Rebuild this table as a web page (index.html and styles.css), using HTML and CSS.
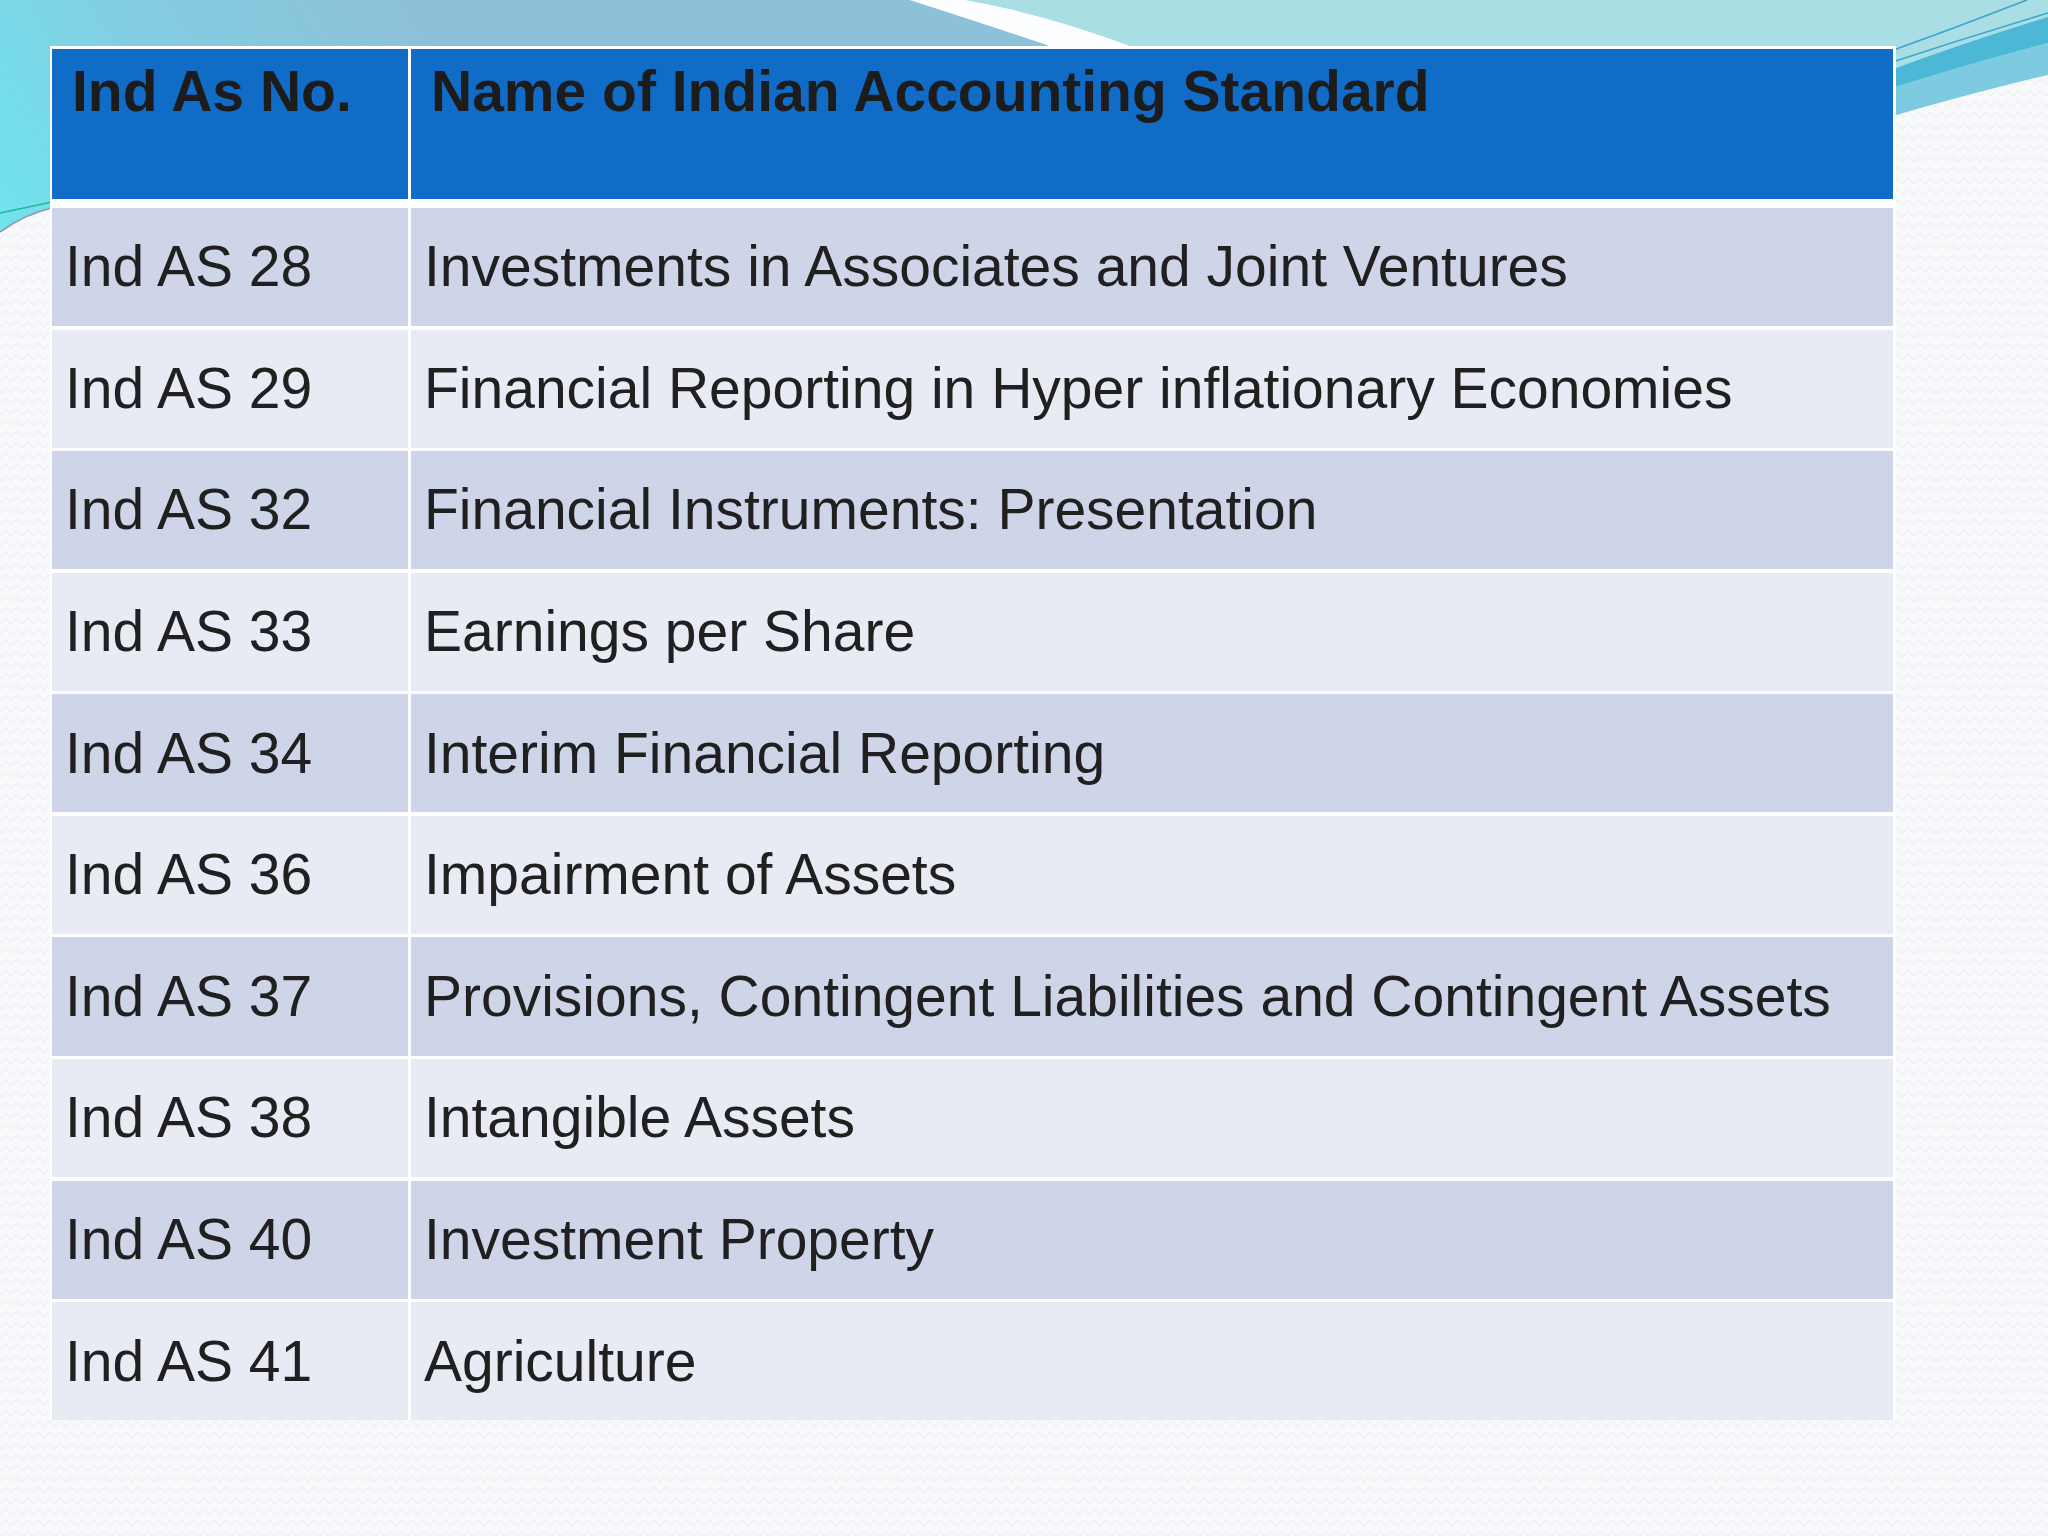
FILE: index.html
```html
<!DOCTYPE html>
<html lang="en">
<head>
<meta charset="utf-8">
<title>Indian Accounting Standards</title>
<link rel="stylesheet" href="styles.css">
</head>
<body>
<div class="backdrop">
  <svg width="2048" height="1536" viewBox="0 0 2048 1536" xmlns="http://www.w3.org/2000/svg">
    <defs>
      <pattern id="zig" width="22" height="11" patternUnits="userSpaceOnUse">
        <path d="M0 8 L5.5 2 L11 8 L16.5 2 L22 8" fill="none" stroke="#e9ebf0" stroke-width="1"/>
      </pattern>
      <linearGradient id="blueGrad" x1="400" y1="0" x2="0" y2="240" gradientUnits="userSpaceOnUse">
        <stop offset="0" stop-color="#8dc1d9"/>
        <stop offset="0.5" stop-color="#83cde0"/>
        <stop offset="1" stop-color="#6fe4ef"/>
      </linearGradient>
    </defs>
    <rect x="0" y="0" width="2048" height="1536" fill="#f8f9fb"/>
    <rect x="0" y="0" width="2048" height="1536" fill="url(#zig)"/>
    <path d="M0 0 H910 Q985 24 1050 46 L1050 205 L60 205 Q25 214 0 232 Z" fill="url(#blueGrad)"/>
    <path d="M910 0 Q985 24 1050 46 L1130 46 Q1045 14 965 0 Z" fill="#fdfeff"/>
    <path d="M965 0 H2048 V200 H1130 V46 Q1045 14 965 0 Z" fill="#a8dee4"/>
    <path d="M1880 74 Q1960 44 2048 17 V43 Q1960 66 1880 92 Z" fill="#4db7d6"/>
    <path d="M1880 92 Q1960 66 2048 43 V75 Q1960 96 1880 120 Z" fill="#7dcbe0"/>
    <path d="M1880 120 Q1960 96 2048 75 V300 H1880 Z" fill="#f8f9fb"/>
    <path d="M1880 120 Q1960 96 2048 75 V300 H1880 Z" fill="url(#zig)"/>
    <path d="M1880 55 Q1955 28 2027 0" fill="none" stroke="#3ba5cc" stroke-width="1.6"/>
    <path d="M1880 66 Q1965 38 2048 13" fill="none" stroke="#3ba5cc" stroke-width="1.6"/>
    <path d="M0 213 L52 202" fill="none" stroke="#1fb99b" stroke-width="1.6"/>
    <path d="M0 232 Q25 214 52 208" fill="none" stroke="#8f9ca2" stroke-width="1.6"/>
  </svg>
</div>
<main class="slide">
  <div class="table">
    <div class="row head">
      <div class="cell">Ind As No.</div>
      <div class="cell">Name of Indian Accounting Standard</div>
    </div>
    <div class="row odd"><div class="cell">Ind AS 28</div><div class="cell">Investments in Associates and Joint Ventures</div></div>
    <div class="row even"><div class="cell">Ind AS 29</div><div class="cell">Financial Reporting in Hyper inflationary Economies</div></div>
    <div class="row odd"><div class="cell">Ind AS 32</div><div class="cell">Financial Instruments: Presentation</div></div>
    <div class="row even"><div class="cell">Ind AS 33</div><div class="cell">Earnings per Share</div></div>
    <div class="row odd"><div class="cell">Ind AS 34</div><div class="cell">Interim Financial Reporting</div></div>
    <div class="row even"><div class="cell">Ind AS 36</div><div class="cell">Impairment of Assets</div></div>
    <div class="row odd"><div class="cell">Ind AS 37</div><div class="cell">Provisions, Contingent Liabilities and Contingent Assets</div></div>
    <div class="row even"><div class="cell">Ind AS 38</div><div class="cell">Intangible Assets</div></div>
    <div class="row odd"><div class="cell">Ind AS 40</div><div class="cell">Investment Property</div></div>
    <div class="row even"><div class="cell">Ind AS 41</div><div class="cell">Agriculture</div></div>
  </div>
</main>
</body>
</html>
```

FILE: styles.css
```css
html, body {
  margin: 0;
  padding: 0;
}

body {
  width: 2048px;
  height: 1536px;
  overflow: hidden;
  position: relative;
  background: #f8f9fb;
  font-family: "Liberation Sans", Arial, sans-serif;
  color: #1f1f1f;
}

.backdrop {
  position: absolute;
  inset: 0;
  z-index: 0;
}

.backdrop svg {
  display: block;
}

.slide {
  position: relative;
  z-index: 1;
  padding: 46px 0 0 50px;
}

.table {
  width: 1841px;
  background: #ffffff;
  padding: 3px 3px 0 2px;
  display: flex;
  flex-direction: column;
  gap: 3.4px;
}

.row {
  display: grid;
  grid-template-columns: 356px 1fr;
  column-gap: 3px;
}

.cell {
  font-size: 57px;
  line-height: 1.15;
  white-space: nowrap;
}

.head {
  height: 150px;
  margin-bottom: 5.6px;
}

.head .cell {
  background: #116cc8;
  font-weight: bold;
  color: #1c1c1c;
  padding: 10px 20px 0 20px;
}

.odd,
.even {
  height: 118.2px;
}

.odd .cell,
.even .cell {
  display: flex;
  align-items: center;
  padding: 0 13px;
  color: #202020;
}

.odd .cell {
  background: #cfd5e9;
}

.even .cell {
  background: #e8eaf4;
}
```
